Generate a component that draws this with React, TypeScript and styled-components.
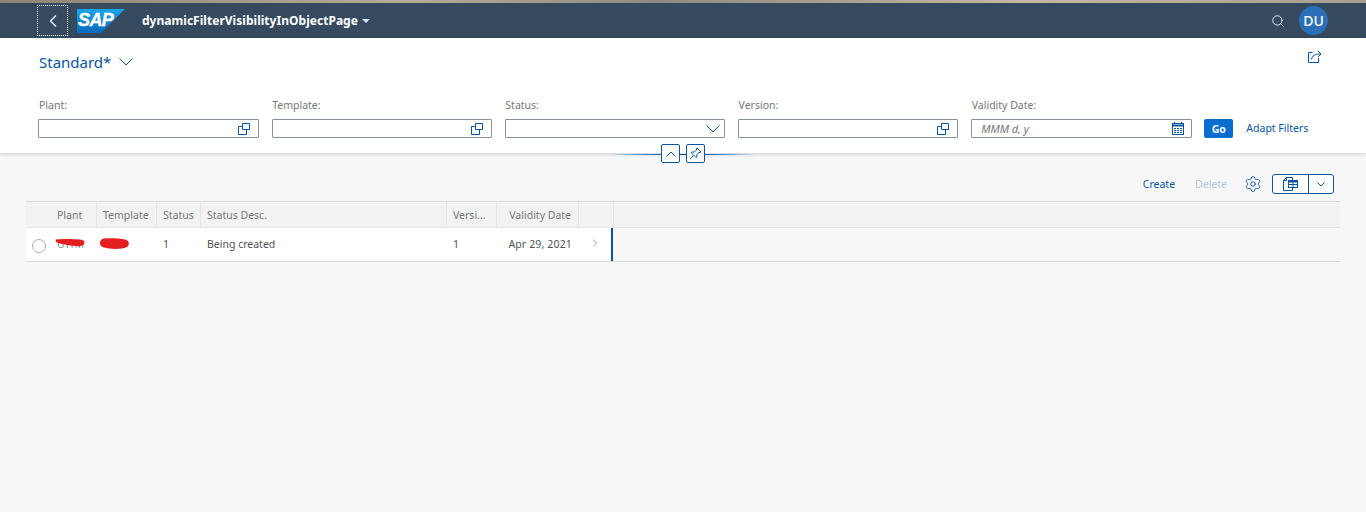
import styled, { createGlobalStyle } from "styled-components";
import { ChevronLeft, ChevronRight, Search, Settings } from "lucide-react";

const blue = "#0a6ed1";
const link = "#0854a0";

const GlobalStyle = createGlobalStyle`
    html, body {
        margin: 0;
        padding: 0;
        height: 100%;
        background: #f7f7f7;
        font-family: "Noto Sans", "Open Sans", sans-serif;
    }
`;

const Page = styled.div`
    width: 1366px;
    height: 512px;
    overflow: hidden;
    display: flex;
    flex-direction: column;
`;

const Strip = styled.div`
    height: 3px;
    background: linear-gradient(90deg, #8d8474 0%, #b8ab97 30%, #8f8a80 48%, #c7b7a0 75%, #a89e8e 100%);
`;

const ShellBar = styled.header`
    height: 35px;
    background: #354a5f;
    display: flex;
    align-items: center;
    padding: 0 38px 0 37px;
    color: #fff;
`;

const BackButton = styled.button`
    width: 31px;
    height: 31px;
    box-sizing: border-box;
    margin: 0;
    padding: 0;
    background: none;
    border: 1px dotted #fff;
    color: #d1e8ff;
    display: flex;
    align-items: center;
    justify-content: center;
`;

const LogoBox = styled.div`
    position: relative;
    width: 48px;
    height: 24px;
    margin: 0 17px 0 9px;
`;

const LogoText = styled.span`
    position: absolute;
    left: 1px;
    top: 0;
    font: italic 700 18px/23px "Liberation Sans", sans-serif;
    letter-spacing: -0.6px;
    -webkit-text-stroke: 0.4px #fff;
    color: #fff;
`;

const AppTitle = styled.div`
    font-size: 12px;
    font-weight: 700;
    letter-spacing: 0.03px;
    display: flex;
    align-items: center;
    gap: 4px;
`;

const TitleCaret = styled.span`
    width: 0;
    height: 0;
    border-left: 4.5px solid transparent;
    border-right: 4.5px solid transparent;
    border-top: 4.5px solid #d1e8ff;
    margin-top: 1px;
`;

const ShellRight = styled.div`
    margin-left: auto;
    display: flex;
    align-items: center;
    gap: 14px;
`;

const Avatar = styled.div`
    width: 29px;
    height: 29px;
    border-radius: 50%;
    background: #2a6fb7;
    display: flex;
    align-items: center;
    justify-content: center;
    font-size: 14px;
    font-weight: 500;
`;

const FilterHeader = styled.section`
    position: relative;
    height: 115px;
    box-sizing: border-box;
    background: #fff;
    box-shadow: 0 1px 4px rgba(0, 0, 0, 0.18);
    padding: 12px 44px 0 38.4px;
`;

const VariantRow = styled.div`
    height: 23px;
    display: flex;
    align-items: center;
    justify-content: space-between;
`;

const Variant = styled.div`
    display: flex;
    align-items: center;
    gap: 8px;
    margin-left: 0.6px;
    font-size: 15px;
    color: ${link};
`;

const ShareIcon = styled.svg`
    width: 14px;
    height: 14px;
    margin-top: -9px;
`;

const FilterRow = styled.div`
    display: flex;
    align-items: flex-end;
    margin-top: 25px;
`;

const Field = styled.div`
    width: 220.4px;
    margin-right: 12.8px;
`;

const Label = styled.div`
    font-size: 10.5px;
    line-height: 14px;
    color: #74777a;
    margin: 0 0 7px 0.6px;
`;

const InputBox = styled.div<{ $end: number }>`
    height: 19px;
    box-sizing: border-box;
    border: 1px solid #89919a;
    border-radius: 1px;
    background: #fff;
    display: flex;
    align-items: center;
    justify-content: space-between;
    padding: 0 ${({ $end }) => $end}px 0 9px;
    color: ${link};
`;

const Placeholder = styled.span`
    font-size: 11px;
    font-style: italic;
    color: #74777a;
`;

const GoButton = styled.button`
    width: 29px;
    height: 19px;
    margin: 0 13px 0 0;
    padding: 0;
    border: 0;
    border-radius: 2px;
    background: ${blue};
    color: #fff;
    font-family: inherit;
    font-size: 10.5px;
    font-weight: 700;
`;

const TextLink = styled.span<{ $disabled?: boolean }>`
    font-size: 10.5px;
    line-height: 19px;
    color: ${({ $disabled }) => ($disabled ? "#b0c8e0" : link)};
`;

const Collapse = styled.div`
    position: absolute;
    left: 610px;
    top: 106px;
    width: 146px;
    height: 19px;
    display: flex;
    align-items: center;
    justify-content: center;
    gap: 6px;
    background: linear-gradient(90deg, rgba(10, 110, 209, 0), #4f93d8 20%, ${link} 40%, ${link} 60%, #4f93d8 80%, rgba(10, 110, 209, 0)) 0 10px / 100% 1px no-repeat;
`;

const CollapseButton = styled.button`
    width: 19px;
    height: 19px;
    margin: 0;
    padding: 0;
    box-sizing: border-box;
    border: 1px solid ${link};
    border-radius: 2px;
    background: #fff;
    color: ${link};
    display: flex;
    align-items: center;
    justify-content: center;
`;

const Content = styled.main`
    flex: 1;
    background: #f7f7f7;
    padding: 21px 26px 0;
`;

const Toolbar = styled.div`
    height: 20px;
    display: flex;
    align-items: center;
    justify-content: flex-end;
    padding-right: 6px;
`;

const ToolbarLink = styled(TextLink)`
    margin-right: 20px;
`;

const GearSlot = styled.span`
    display: flex;
    color: ${link};
    margin: 0 10px 0 -3px;
`;

const SplitButton = styled.div`
    width: 62px;
    height: 20px;
    box-sizing: border-box;
    border: 1px solid ${link};
    border-radius: 3px;
    display: flex;
    color: ${link};
    background: #fff;
`;

const SplitMain = styled.span`
    width: 35px;
    border-right: 1px solid ${link};
    display: flex;
    align-items: center;
    justify-content: center;
`;

const SplitArrow = styled.span`
    flex: 1;
    display: flex;
    align-items: center;
    justify-content: center;
`;

const Table = styled.div`
    margin-top: 7px;
    width: 1314px;
`;

const columns = "25px 46px 60px 44px 246px 50px 82px 35px 1fr";

const HeaderRow = styled.div`
    display: grid;
    grid-template-columns: ${columns};
    height: 27px;
    box-sizing: border-box;
    background: #f2f2f2;
    border-top: 1px solid #d9d9d9;
    border-bottom: 1px solid #e5e5e5;
`;

const HeaderCell = styled.div<{ $right?: boolean; $plain?: boolean }>`
    font-size: 10.5px;
    line-height: 26px;
    color: #74777a;
    padding: 0 ${({ $right }) => ($right ? 7 : 6)}px 0 6px;
    text-align: ${({ $right }) => ($right ? "right" : "left")};
    border-right: ${({ $plain }) => ($plain ? "0" : "1px solid #e5e5e5")};
    white-space: nowrap;
`;

const BodyRow = styled.div`
    display: grid;
    grid-template-columns: ${columns};
    height: 34px;
    box-sizing: border-box;
    border-bottom: 1px solid #d9d9d9;
`;

const BodyCell = styled.div<{ $right?: boolean }>`
    position: relative;
    background: #fff;
    font-size: 10.5px;
    line-height: 32px;
    color: #4f5356;
    padding: 0 ${({ $right }) => ($right ? 7 : 6)}px 0 6px;
    text-align: ${({ $right }) => ($right ? "right" : "left")};
    letter-spacing: ${({ $right }) => ($right ? "0.15px" : "0")};
    white-space: nowrap;
`;

const RadioCell = styled(BodyCell)`
    padding: 0;
    display: flex;
    align-items: center;
    justify-content: center;
`;

const Radio = styled.span`
    width: 14px;
    height: 14px;
    margin: 2px 0 0 0;
    box-sizing: border-box;
    border: 1px solid #a9b0b8;
    border-radius: 50%;
    background: #fff;
`;

const HiddenValue = styled.span`
    color: #8a8d90;
    letter-spacing: 1px;
`;

const Scribble = styled.svg<{ $left: number }>`
    position: absolute;
    left: ${({ $left }) => $left}px;
    top: 10px;
`;

const NavCell = styled(BodyCell)`
    border-right: 2px solid ${link};
    margin-right: 1px;
    display: flex;
    align-items: center;
    padding: 0 0 4px 10px;
    color: #55585b;
`;

const EmptyCell = styled.div`
    background: #f7f7f7;
`;

const Chevron = ({ width, up }: { width: number; up?: boolean }) => {
    const height = Math.ceil(width / 2) + 1;
    const d = up
        ? `M.5 ${height - 0.5}L${width / 2} 1L${width - 0.5} ${height - 0.5}`
        : `M.5 .5L${width / 2} ${height - 1}L${width - 0.5} .5`;
    return (
        <svg width={width} height={height} viewBox={`0 0 ${width} ${height}`} fill="none" stroke="currentColor" strokeWidth="1">
            <path d={d} />
        </svg>
    );
};

const ValueHelpIcon = () => (
    <svg width="12" height="12" viewBox="0 0 12 12" fill="none" stroke="currentColor" strokeWidth="1">
        <path d="M4.500 3.500H.5v8h8V7" />
        <path d="M4.500 .5h7v6h-7z" />
    </svg>
);

const CalendarIcon = () => (
    <svg width="12" height="13" viewBox="0 0 12 13" fill="none" stroke="currentColor" strokeWidth="1">
        <rect x=".5" y="1.500" width="11" height="11" />
        <path d="M.5 3.500h11" strokeWidth="2" />
        <path d="M2.500 0v2M9.500 0v2" />
        <path d="M2 6.500h2M5 6.500h2M8 6.500h2M2 8.500h2M5 8.500h2M8 8.500h2M2 10.500h2M5 10.500h2M8 10.500h2" />
    </svg>
);

const PinIcon = () => (
    <svg width="13" height="13" viewBox="0 0 13 13" fill="none" stroke="currentColor" strokeWidth="1">
        <path d="M8 1l4 4-1 .6-1-.3-2.300 2.300.3 2.200-1 .8-4.700-4.700.8-1 2.200.3L7.600 2.900l-.3-1z" />
        <path d="M4.500 8.500L1 12" />
    </svg>
);

const ExportIcon = () => (
    <svg width="15" height="14" viewBox="0 0 15 14" fill="none" stroke="currentColor" strokeWidth="1">
        <path d="M3.500 .5H9.500V3M3.500 .5L.5 3.500V13.500H9.500V10.500" />
        <path d="M3.500 .5V3.500H.5" />
        <rect x="5.500" y="3.500" width="9" height="7" fill="#fff" />
        <path d="M5.500 4.500h9" strokeWidth="2" />
        <path d="M5.500 7.500h9M10 3.500v7" />
    </svg>
);

const Filter = ({ label, end = 8, children }: { label: string; end?: number; children: React.ReactNode }) => (
    <Field>
        <Label>{label}</Label>
        <InputBox $end={end}>{children}</InputBox>
    </Field>
);

const App = () => {
    return (
        <Page>
            <GlobalStyle />
            <Strip />
            <ShellBar>
                <BackButton aria-label="Back">
                    <ChevronLeft size={20} strokeWidth={2} />
                </BackButton>
                <LogoBox>
                    <svg width="48" height="24" viewBox="0 0 48 24">
                        <defs>
                            <linearGradient id="sapBlue" x1="0" y1="0" x2="0" y2="1">
                                <stop offset="0" stopColor="#19a7e8" />
                                <stop offset="1" stopColor="#0a68bd" />
                            </linearGradient>
                        </defs>
                        <path d="M0 0h48L24 24H0z" fill="url(#sapBlue)" />
                    </svg>
                    <LogoText>SAP</LogoText>
                </LogoBox>
                <AppTitle>
                    dynamicFilterVisibilityInObjectPage
                    <TitleCaret />
                </AppTitle>
                <ShellRight>
                    <Search size={14} strokeWidth={1.6} color="#e4f1ff" />
                    <Avatar>DU</Avatar>
                </ShellRight>
            </ShellBar>
            <FilterHeader>
                <VariantRow>
                    <Variant>
                        Standard*
                        <Chevron width={14} />
                    </Variant>
                    <ShareIcon viewBox="0 0 14 14" fill="none" stroke={link} strokeWidth="1">
                        <path d="M4.500 2.500H.5v10h10V8" />
                        <path d="M3.500 9.500c.5-3.500 3-5.500 9-5.500M10 1l3 3-3 3" />
                    </ShareIcon>
                </VariantRow>
                <FilterRow>
                    <Filter label="Plant:"><span /><ValueHelpIcon /></Filter>
                    <Filter label="Template:"><span /><ValueHelpIcon /></Filter>
                    <Filter label="Status:" end={4}><span /><Chevron width={14} /></Filter>
                    <Filter label="Version:"><span /><ValueHelpIcon /></Filter>
                    <Filter label="Validity Date:" end={7}>
                        <Placeholder>MMM d, y</Placeholder>
                        <CalendarIcon />
                    </Filter>
                    <GoButton>Go</GoButton>
                    <TextLink>Adapt Filters</TextLink>
                </FilterRow>
                <Collapse>
                    <CollapseButton aria-label="Collapse"><Chevron width={10} up /></CollapseButton>
                    <CollapseButton aria-label="Pin"><PinIcon /></CollapseButton>
                </Collapse>
            </FilterHeader>
            <Content>
                <Toolbar>
                    <ToolbarLink>Create</ToolbarLink>
                    <ToolbarLink $disabled>Delete</ToolbarLink>
                    <GearSlot><Settings size={18} strokeWidth={1.2} /></GearSlot>
                    <SplitButton>
                        <SplitMain><ExportIcon /></SplitMain>
                        <SplitArrow><Chevron width={8} /></SplitArrow>
                    </SplitButton>
                </Toolbar>
                <Table>
                    <HeaderRow>
                        <HeaderCell $plain />
                        <HeaderCell>Plant</HeaderCell>
                        <HeaderCell>Template</HeaderCell>
                        <HeaderCell>Status</HeaderCell>
                        <HeaderCell>Status Desc.</HeaderCell>
                        <HeaderCell>Versi...</HeaderCell>
                        <HeaderCell $right>Validity Date</HeaderCell>
                        <HeaderCell />
                        <HeaderCell $plain />
                    </HeaderRow>
                    <BodyRow>
                        <RadioCell><Radio /></RadioCell>
                        <BodyCell>
                            <HiddenValue>UHM</HiddenValue>
                            <Scribble $left={4} width="30" height="9" viewBox="0 0 30 9">
                                <path d="M1 1.500C8 .5 18 1 24 1.500c3 .2 5.500 1 5.500 3s-2 3.500-5 3.500C17 8.500 9 6.500 3 5 1 4.500 0 2 1 1.500z" fill="#e41e1e" />
                            </Scribble>
                        </BodyCell>
                        <BodyCell>
                            <Scribble $left={3} width="29" height="11" viewBox="0 0 29 11">
                                <path d="M4 .5C11 0 20 .5 25 1.500c3 .7 4 2.500 3.800 4.500-.2 2.500-3 4-6.800 4.500-6 .7-13 .5-18-1C1 9 0 7 0 5 0 2.500 1.500 1 4 .5z" fill="#e41e1e" />
                            </Scribble>
                        </BodyCell>
                        <BodyCell>1</BodyCell>
                        <BodyCell>Being created</BodyCell>
                        <BodyCell>1</BodyCell>
                        <BodyCell $right>Apr 29, 2021</BodyCell>
                        <NavCell><ChevronRight size={12} strokeWidth={1.1} /></NavCell>
                        <EmptyCell />
                    </BodyRow>
                </Table>
            </Content>
        </Page>
    );
};

export default App;
